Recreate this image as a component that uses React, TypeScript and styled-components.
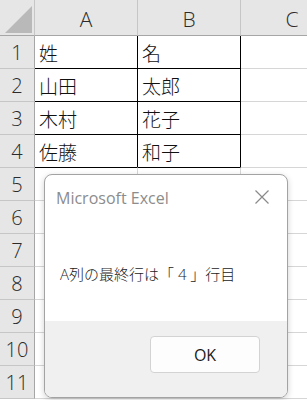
import React from 'react'
import styled, { createGlobalStyle } from 'styled-components'

const GlobalStyle = createGlobalStyle`
  html, body {
    margin: 0;
    padding: 0;
    background: #ffffff;
    overflow: hidden;
  }
  body {
    font-family: "Open Sans", "Noto Sans CJK JP", sans-serif;
  }
`

const COLUMNS = ['A', 'B', 'C']
const DATA: string[][] = [
  ['姓', '名'],
  ['山田', '太郎'],
  ['木村', '花子'],
  ['佐藤', '和子'],
]
const ROW_COUNT = 11

const App: React.FC = () => (
  <Page>
    <GlobalStyle />
    <Sheet>
      <Corner>
        <CornerTriangle />
      </Corner>
      {COLUMNS.map((c) => (
        <ColHeader key={c}>{c}</ColHeader>
      ))}
      {Array.from({ length: ROW_COUNT }, (_, r) => (
        <React.Fragment key={r}>
          <RowHeader>{r + 1}</RowHeader>
          {COLUMNS.map((c, ci) => {
            const value = DATA[r]?.[ci]
            const inRange = r < DATA.length && ci < 2
            return (
              <Cell key={c} $bordered={inRange} $topBlack={r === DATA.length && ci < 2}>
                {value}
              </Cell>
            )
          })}
        </React.Fragment>
      ))}
    </Sheet>

    <Dialog>
      <DialogBody>
        <TitleBar>
          <Title>Microsoft Excel</Title>
          <CloseIcon viewBox="0 0 16 16">
            <path d="M1.5 1.5 L14.5 14.5 M14.5 1.5 L1.5 14.5" />
          </CloseIcon>
        </TitleBar>
        <Message>A列の最終行は「 4 」行目</Message>
      </DialogBody>
      <Footer>
        <OkButton>OK</OkButton>
      </Footer>
    </Dialog>
  </Page>
)

const Page = styled.div`
  position: relative;
  width: 307px;
  height: 400px;
  overflow: hidden;
`

const Sheet = styled.div`
  display: grid;
  grid-template-columns: 35px 103px 103px 103px;
  grid-template-rows: 36px repeat(11, 33px);
`

const Corner = styled.div`
  background: #e6e6e6;
  border-right: 1px solid #c6c6c6;
  border-bottom: 1px solid #a6a6a6;
  box-sizing: border-box;
  position: relative;
`

const CornerTriangle = styled.div`
  position: absolute;
  right: 2px;
  bottom: 2px;
  width: 27px;
  height: 27px;
  background: #b9b9b9;
  clip-path: polygon(100% 0, 100% 100%, 0 100%);
`

const ColHeader = styled.div`
  background: #e6e6e6;
  border-right: 1px solid #c6c6c6;
  border-bottom: 1px solid #a6a6a6;
  box-sizing: border-box;
  display: flex;
  align-items: center;
  justify-content: center;
  font-size: 21px;
  font-weight: 300;
  color: #2b2b2b;
  padding-top: 2px;
`

const RowHeader = styled.div`
  background: #e6e6e6;
  border-right: 1px solid #a6a6a6;
  border-bottom: 1px solid #c6c6c6;
  box-sizing: border-box;
  display: flex;
  align-items: center;
  justify-content: center;
  font-size: 20px;
  font-weight: 300;
  color: #2b2b2b;
`

const Cell = styled.div<{ $bordered: boolean; $topBlack: boolean }>`
  box-sizing: border-box;
  border-right: 1px solid ${(p) => (p.$bordered ? '#000000' : '#d6d6d6')};
  border-bottom: 1px solid ${(p) => (p.$bordered ? '#000000' : '#d6d6d6')};
  display: flex;
  align-items: center;
  padding-left: 4px;
  font-family: "Noto Sans CJK JP", sans-serif;
  font-size: 19px;
  font-weight: 300;
  color: #111111;
  ${(p) => p.$topBlack && 'border-top: 1px solid #000000; margin-top: -1px;'}
`

const Dialog = styled.div`
  position: absolute;
  left: 44px;
  top: 174px;
  width: 244px;
  height: 224px;
  box-sizing: border-box;
  border: 1px solid #a3a3a3;
  border-radius: 8px;
  background: #ffffff;
  box-shadow: 0 2px 6px rgba(0, 0, 0, 0.18);
  overflow: hidden;
  display: flex;
  flex-direction: column;
`

const DialogBody = styled.div`
  flex: 1;
  display: flex;
  flex-direction: column;
`

const TitleBar = styled.div`
  display: flex;
  align-items: center;
  justify-content: space-between;
  height: 44px;
  padding: 0 17px 0 11px;
`

const Title = styled.span`
  font-size: 16px;
  color: #8c8c8c;
  padding-top: 2px;
`

const CloseIcon = styled.svg`
  width: 16px;
  height: 16px;
  fill: none;
  stroke: #8a8a8a;
  stroke-width: 1.2;
`

const Message = styled.p`
  margin: 44px 0 0 15px;
  font-family: "Open Sans", "Noto Sans CJK JP", sans-serif;
  font-size: 15px;
  font-weight: 300;
  color: #1a1a1a;
`

const Footer = styled.div`
  height: 76px;
  background: #f0f0f0;
  display: flex;
  justify-content: flex-end;
  padding: 15px 27px 0 0;
  box-sizing: border-box;
`

const OkButton = styled.button`
  width: 110px;
  height: 37px;
  background: #fdfdfd;
  border: 1px solid #d3d3d3;
  border-radius: 4px;
  font-family: "Open Sans", sans-serif;
  font-size: 16px;
  color: #1a1a1a;
  padding: 0;
`

export default App
